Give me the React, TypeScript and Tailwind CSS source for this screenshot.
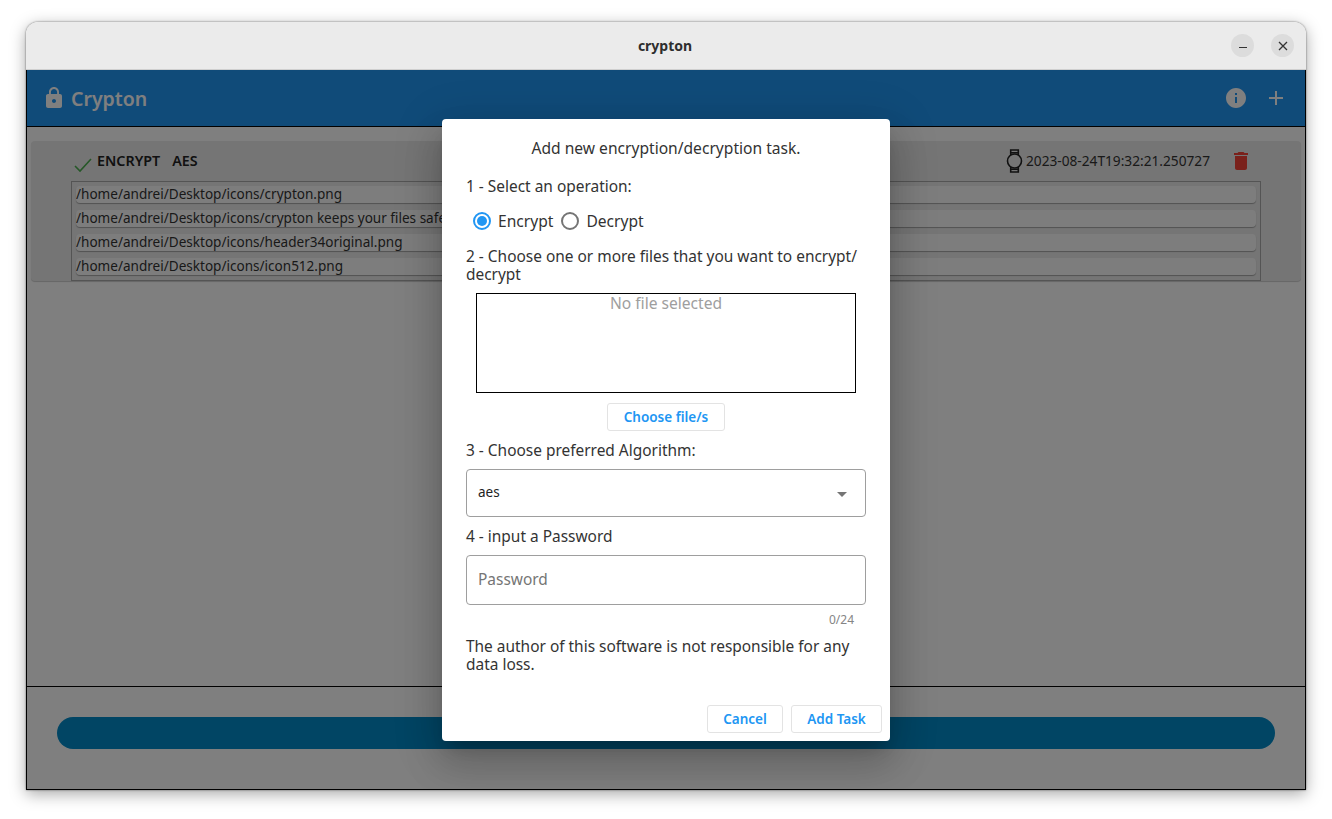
import React from "react";
import { MdLock, MdInfo, MdAdd, MdDelete } from "react-icons/md";

const files = [
  "/home/andrei/Desktop/icons/crypton.png",
  "/home/andrei/Desktop/icons/crypton keeps your files safe.png",
  "/home/andrei/Desktop/icons/header34original.png",
  "/home/andrei/Desktop/icons/icon512.png",
];

function OutlineButton({ children, className }: { children: React.ReactNode; className: string }) {
  return (
    <button className={`h-[28px] rounded-[3px] border border-[#e3e3e3] bg-white text-[13.5px] font-semibold text-[#2196f3] ${className}`}>
      {children}
    </button>
  );
}

export default function App() {
  return (
    <div className="h-[819px] w-[1332px] overflow-hidden bg-white pl-[26px] pt-[22px] text-[#222222] font-['Noto_Sans',sans-serif]">
      <div className="relative flex h-[768px] w-[1280px] flex-col overflow-hidden rounded-t-[12px] shadow-[0_0_2px_rgba(0,0,0,0.6),0_4px_16px_rgba(0,0,0,0.35)]">
        <div className="relative flex h-[48px] shrink-0 items-center justify-center border-b border-[#cfcfcf] bg-[#ebebeb] pr-[2px]">
          <span className="text-[14px] font-bold text-[#2e2e2e]">crypton</span>
          <div className="absolute right-[12px] top-[12px] flex gap-[17px]">
            <div className="flex size-[23px] items-center justify-center rounded-full bg-[#dcdcdc]">
              <div className="mt-[3px] h-[1px] w-[8px] bg-[#333333]" />
            </div>
            <div className="flex size-[23px] items-center justify-center rounded-full bg-[#dcdcdc]">
              <svg width="10" height="10" viewBox="0 0 10 10" stroke="#333333" strokeWidth="1.3"><path d="M1 1l8 8M9 1l-8 8" /></svg>
            </div>
          </div>
        </div>

        <div className="relative flex min-h-0 flex-1 flex-col border-x border-b border-black bg-white">
          <div className="flex h-[57px] shrink-0 items-center justify-between border-b border-black bg-[#2196f3] pl-[15px] pr-[17px] text-white">
            <div className="flex items-center gap-[5px]">
              <MdLock size={24} />
              <span className="mt-[1px] text-[19.5px] font-semibold">Crypton</span>
            </div>
            <div className="flex items-center gap-[16px]">
              <MdInfo size={24} />
              <MdAdd size={24} />
            </div>
          </div>

          <div className="min-h-0 flex-1 border-b border-black px-[4px] pt-[14px]">
            <div className="h-[140px] rounded-[4px] bg-[#ebebeb] pl-[40px] pr-[40px] shadow-[0_1px_1px_rgba(0,0,0,0.2)]">
              <div className="flex h-[40px] items-center justify-between">
                <div className="flex items-center">
                  <svg className="ml-[2px] mt-[8px]" width="20" height="16" viewBox="0 0 20 16" fill="none" stroke="#4caf50" strokeWidth="1.6"><path d="M2 9l5 5L18 2" /></svg>
                  <span className="mb-[1px] ml-[4px] text-[14.3px] font-semibold text-[#222222]">ENCRYPT</span>
                  <span className="mb-[1px] ml-[12px] text-[14.3px] font-semibold text-[#222222]">AES</span>
                </div>
                <div className="mr-[8px] flex items-center">
                  <svg width="17" height="26" viewBox="0 0 17 26" fill="none" stroke="#222222" strokeWidth="1.6">
                    <circle cx="8.5" cy="13" r="7" />
                    <path d="M4.7 7V2h7.6v5M4.7 19v5h7.6v-5M4.7 4.8h7.6M4.7 21.2h7.6" />
                  </svg>
                  <span className="ml-[3px] text-[13.7px] text-[#333333]">2023-08-24T19:32:21.250727</span>
                  <MdDelete size={24} className="ml-[19px] text-[#f44336]" />
                </div>
              </div>
              <div className="flex h-[100px] flex-col gap-[7px] border border-[#a8a8a8] px-[4px] pt-[4px]">
                {files.map((f) => (
                  <div key={f} className="h-[17px] truncate rounded-[4px] bg-[#fbfbfb] text-[13.56px] leading-[17px] text-[#333333] shadow-[0_1px_1px_rgba(0,0,0,0.3)]">
                    {f}
                  </div>
                ))}
              </div>
            </div>
          </div>

          <div className="flex h-[102px] shrink-0 items-start px-[30px] pt-[30px]">
            <div className="h-[32px] w-full rounded-full bg-[#028bc9]" />
          </div>
        </div>

        <div className="absolute inset-x-0 bottom-0 top-[48px] flex items-center justify-center bg-black/50">
          <div className="flex h-[622px] w-[448px] flex-col rounded-[4px] bg-white px-[24px] pt-[20px] text-[15.45px] leading-[18px] text-[#333333] shadow-[0_11px_15px_-7px_rgba(0,0,0,0.2),0_24px_38px_3px_rgba(0,0,0,0.14),0_9px_46px_8px_rgba(0,0,0,0.12)]">
            <p className="text-center text-[15.6px]">Add new encryption/decryption task.</p>
            <p className="mt-[20px]">1 - Select an operation:</p>
            <div className="mt-[17px] flex items-center pl-[7px] text-[15.6px]">
              <span className="flex size-[18px] items-center justify-center rounded-full border-2 border-[#2196f3]">
                <span className="size-[10px] rounded-full bg-[#2196f3]" />
              </span>
              <span className="ml-[7px]">Encrypt</span>
              <span className="ml-[8px] size-[18px] rounded-full border-2 border-[#757575]" />
              <span className="ml-[7px]">Decrypt</span>
            </div>
            <p className="mt-[17px]">2 - Choose one or more files that you want to encrypt/ decrypt</p>
            <div className="mx-[10px] mt-[10px] h-[100px] border border-black text-center text-[15.6px] text-[#9e9e9e]">No file selected</div>
            <OutlineButton className="mt-[10px] w-[118px] self-center">Choose file/s</OutlineButton>
            <p className="mt-[10px]">3 - Choose preferred Algorithm:</p>
            <div className="mt-[10px] flex h-[48px] items-center justify-between rounded-[4px] border border-[#9e9e9e] pb-[3px] pl-[11px] pr-[18px] text-[13.5px]">
              <span className="text-[#222222]">aes</span>
              <span className="mt-[5px] h-0 w-0 border-x-[5px] border-t-[5px] border-x-transparent border-t-[#757575]" />
            </div>
            <p className="mt-[10px]">4 - input a Password</p>
            <div className="mt-[10px] flex h-[50px] items-center rounded-[4px] border border-[#9e9e9e] pb-[2px] pl-[11px] text-[#757575]">Password</div>
            <p className="mr-[12px] mt-[7px] text-right text-[12px] leading-[16px] text-[#858585]">0/24</p>
            <p className="mt-[9px]">The author of this software is not responsible for any data loss.</p>
            <div className="mb-[8px] mr-[-16px] mt-auto flex justify-end gap-[8px]">
              <OutlineButton className="w-[76px]">Cancel</OutlineButton>
              <OutlineButton className="w-[91px]">Add Task</OutlineButton>
            </div>
          </div>
        </div>
      </div>
    </div>
  );
}
